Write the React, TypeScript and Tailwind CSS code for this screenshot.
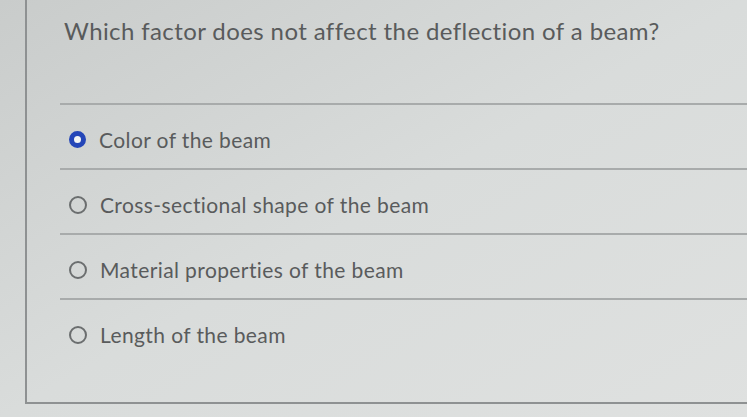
const options = [
  'Color of the beam',
  'Cross-sectional shape of the beam',
  'Material properties of the beam',
  'Length of the beam',
];

function Radio({ checked }: { checked: boolean }) {
  if (checked) {
    return (
      <span className="block h-[17px] w-[17px] shrink-0 rounded-full border-[5px] border-[#2446b8] bg-[#f2f4f4]" />
    );
  }
  return <span className="block h-[18px] w-[18px] shrink-0 rounded-full border-2 border-[#6b6e6f]" />;
}

export default function App() {
  return (
    <div
      className="h-[417px] w-[747px] overflow-hidden bg-gradient-to-br from-[#c9cccb] via-[#d9dcdb] to-[#dfe1e0] text-[#595b5c]"
      style={{ fontFamily: 'Lato, "Open Sans", sans-serif' }}
    >
      <div className="ml-[25px] h-[404px] border-b-2 border-l-2 border-[#8e9192]">
        <div className="pl-[37px] pt-[16px] text-[24px] leading-[30px] tracking-[0.4px]">
          Which factor does not affect the deflection of a beam?
        </div>

        <div className="ml-[33px] mt-[57px]">
          {options.map((label, i) => (
            <div
              key={label}
              className="flex h-[65px] items-start gap-[13px] border-t-2 border-[#a8abab] pl-[9px] pt-[23px]"
            >
              <div className="pt-[3px]">
                <Radio checked={i === 0} />
              </div>
              <span className="text-[21px] leading-[24px] tracking-[0.4px]">{label}</span>
            </div>
          ))}
        </div>
      </div>
    </div>
  );
}
